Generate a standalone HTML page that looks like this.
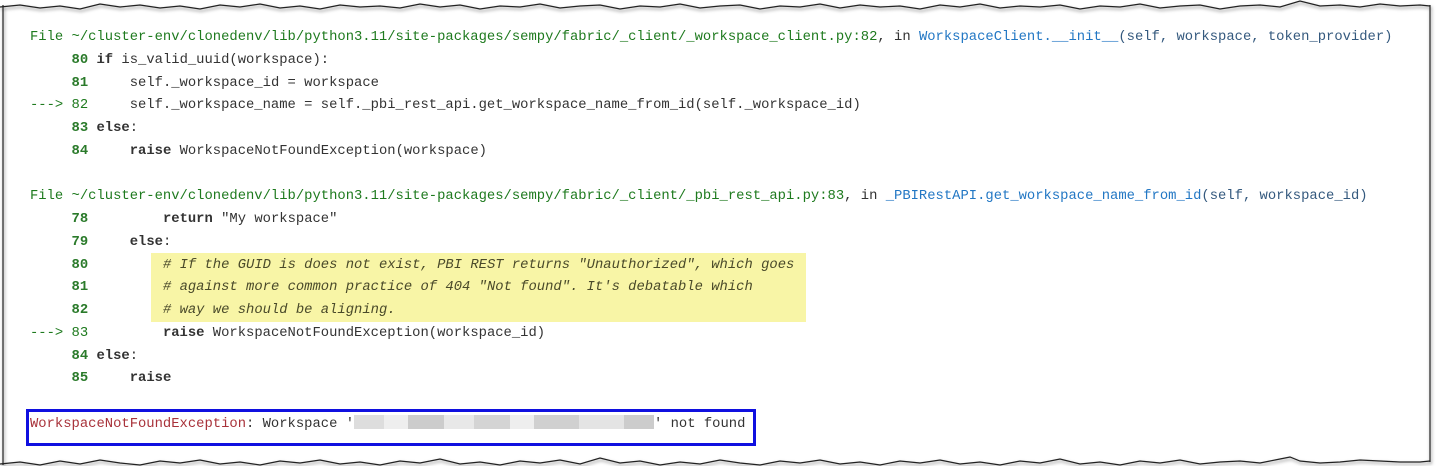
<!DOCTYPE html>
<html><head><meta charset="utf-8"><style>
html,body{margin:0;padding:0;width:1440px;height:473px;background:#fff;overflow:hidden;position:relative}
.code{position:absolute;left:30px;top:26px;font-family:"Liberation Mono",monospace;font-size:13.85px;line-height:22.75px;color:#333;white-space:pre}
.g{color:#1e7a1e}.n{color:#2a7a2a;font-weight:bold}.k{font-weight:bold;color:#333}
.b{color:#2277c4}.a{color:#34597e}.c{font-style:italic;color:#4a4a2a}.r{color:#a8323a}
.hl{position:absolute;left:151px;top:253px;width:655px;height:69px;background:#f8f5a6}
.box{position:absolute;left:26px;top:409px;width:724px;height:31px;border:3px solid #1010e0}
.blur{display:inline-block;height:14px;vertical-align:-2px;background:linear-gradient(90deg,#ddd 0 10%,#eee 10% 18%,#ccc 18% 30%,#e8e8e8 30% 40%,#d4d4d4 40% 52%,#eee 52% 60%,#d0d0d0 60% 75%,#e4e4e4 75% 90%,#ccc 90%)}
</style></head><body>
<div class="hl"></div>
<div class="box"></div>
<div class="code"><span class="g">File ~/cluster-env/clonedenv/lib/python3.11/site-packages/sempy/fabric/_client/_workspace_client.py:82</span>, in <span class="b">WorkspaceClient.__init__</span><span class="a">(self, workspace, token_provider)</span>
     <span class="n">80</span> <span class="k">if</span> is_valid_uuid(workspace):
     <span class="n">81</span>     self._workspace_id = workspace
<span class="g">---&gt; 82</span>     self._workspace_name = self._pbi_rest_api.get_workspace_name_from_id(self._workspace_id)
     <span class="n">83</span> <span class="k">else</span>:
     <span class="n">84</span>     <span class="k">raise</span> WorkspaceNotFoundException(workspace)

<span class="g">File ~/cluster-env/clonedenv/lib/python3.11/site-packages/sempy/fabric/_client/_pbi_rest_api.py:83</span>, in <span class="b">_PBIRestAPI.get_workspace_name_from_id</span><span class="a">(self, workspace_id)</span>
     <span class="n">78</span>         <span class="k">return</span> "My workspace"
     <span class="n">79</span>     <span class="k">else</span>:
     <span class="n">80</span>         <span class="c"># If the GUID is does not exist, PBI REST returns "Unauthorized", which goes</span>
     <span class="n">81</span>         <span class="c"># against more common practice of 404 "Not found". It's debatable which</span>
     <span class="n">82</span>         <span class="c"># way we should be aligning.</span>
<span class="g">---&gt; 83</span>         <span class="k">raise</span> WorkspaceNotFoundException(workspace_id)
     <span class="n">84</span> <span class="k">else</span>:
     <span class="n">85</span>     <span class="k">raise</span>

<span class="r">WorkspaceNotFoundException</span>: Workspace '<span class="blur" style="width:300px"></span>' not found</div>
<svg width="1440" height="473" style="position:absolute;left:0;top:0">
<defs><filter id="s"><feDropShadow dx="1" dy="2" stdDeviation="1.5" flood-color="#000" flood-opacity="0.5"/></filter></defs>
<g filter="url(#s)" fill="none" stroke="#222" stroke-width="1.2">
<polyline points="0,7 20,5 40,8 60,6 80,9 100,4 120,7 140,5 160,8 180,6 200,9 220,5 240,7 260,4 280,8 300,6 320,9 340,5 360,7 380,6 400,8 420,4 440,7 460,5 480,9 500,6 520,7 540,4 560,8 580,6 600,5 620,9 640,6 660,7 680,4 700,8 720,6 740,5 760,9 780,6 800,7 820,4 840,8 860,5 880,7 900,6 920,9 940,5 960,7 980,4 1000,8 1020,6 1040,7 1060,5 1080,9 1100,6 1120,7 1140,4 1160,8 1180,6 1200,5 1220,9 1240,6 1260,5 1280,7 1300,1 1320,6 1340,5 1360,7 1380,4 1400,6 1420,5 1430,6"/>
<polyline points="1430,5 1430,462"/>
<polyline points="3,5 3,465"/>
<polyline points="0,464 20,462 40,465 60,461 80,464 100,460 120,463 140,465 160,461 180,463 200,460 220,464 240,462 260,465 280,461 300,463 320,460 340,464 360,462 380,465 400,461 420,463 440,459 460,464 480,462 500,465 520,461 540,463 560,460 580,464 600,458 620,463 640,461 660,465 680,462 700,464 720,460 740,463 760,465 780,461 800,463 820,460 840,464 860,462 880,465 900,461 920,463 940,460 960,464 980,462 1000,465 1020,461 1040,463 1060,459 1080,464 1100,462 1120,465 1140,461 1160,463 1180,460 1200,464 1220,462 1240,461 1260,463 1280,459 1290,457 1300,461 1320,463 1340,462 1360,460 1380,461 1400,462 1420,462 1430,461"/>
</g>
<rect x="0" y="466" width="1440" height="7" fill="#fff"/>
</svg>
</body></html>
